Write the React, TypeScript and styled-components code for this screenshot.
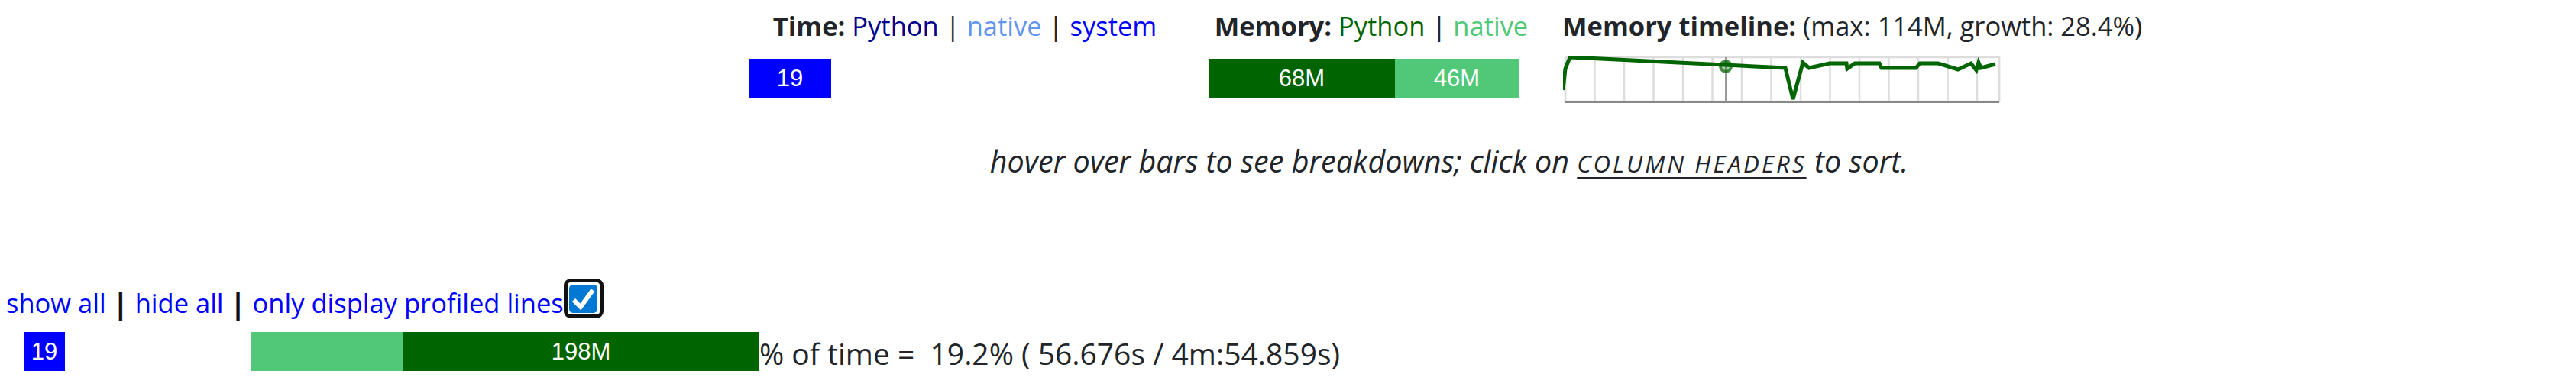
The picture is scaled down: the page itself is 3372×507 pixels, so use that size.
import React from "react";
import styled, { createGlobalStyle } from "styled-components";

const GlobalStyle = createGlobalStyle`
  body {
    margin: 8px;
    background: #ffffff;
    font-family: "Open Sans", "Noto Sans", sans-serif;
    color: #212529;
  }
`;

const Header = styled.div`
  margin-left: 962px;
  width: 1854px;
`;

const Summary = styled.div`
  display: flex;
`;

const Column = styled.div<{ $width?: number; $pad: number; $align: "center" | "left" }>`
  display: flex;
  flex-direction: column;
  width: ${(p) => (p.$width ? `${p.$width}px` : "auto")};
  flex: ${(p) => (p.$width ? "none" : "1")};
  text-align: ${(p) => p.$align};

  & > :last-child {
    margin-left: ${(p) => p.$pad}px;
  }
`;

const Title = styled.div<{ $indent?: number }>`
  font-size: 34.5px;
  line-height: 51px;
  white-space: nowrap;
  padding-left: ${(p) => p.$indent ?? 0}px;

  b {
    font-weight: 700;
  }
`;

const Pipe = styled.span`
  color: #212529;
`;

const Tint = styled.span<{ $color: string }>`
  color: ${(p) => p.$color};
`;

const Bar = styled.div`
  display: flex;
  height: 52px;
  margin-top: 18px;
`;

const Segment = styled.div<{ $color: string; $width: number }>`
  width: ${(p) => p.$width}px;
  background: ${(p) => p.$color};
  color: #ffffff;
  font-family: "Liberation Sans", Arial, sans-serif;
  font-size: 31px;
  display: flex;
  align-items: center;
  justify-content: center;
`;

const Timeline = styled.svg`
  display: block;
  margin-top: 14px;
`;

const Hint = styled.div`
  margin-top: 46px;
  text-align: center;
  font-style: italic;
  font-size: 39.5px;
  line-height: 58px;
  white-space: nowrap;
`;

const SmallCaps = styled.span`
  text-transform: uppercase;
  font-size: 0.79em;
  letter-spacing: 3px;
  text-decoration: underline;
  text-decoration-thickness: 3px;
  text-underline-offset: 6px;
`;

const Controls = styled.div`
  display: flex;
  align-items: flex-end;
  margin-top: 122px;
`;

const Link = styled.span`
  color: #0000ff;
  font-size: 34.5px;
  line-height: 51px;
  white-space: nowrap;
`;

const Sep = styled.span`
  font-size: 40px;
  font-weight: 700;
  line-height: 51px;
  color: #111111;
  margin: 0 8px;
`;

const Check = styled.span`
  box-sizing: border-box;
  width: 52px;
  height: 52px;
  border: 5px solid #111111;
  border-radius: 9px;
  padding: 2.5px;
  margin-bottom: 5px;
  background: #ffffff;
  display: flex;
`;

const CheckInner = styled.span`
  flex: 1;
  background: #0078d4;
  border-radius: 5px;
  display: flex;
`;

const FileRow = styled.div`
  display: flex;
  align-items: center;
  margin-top: 13px;
  height: 51px;
`;

const LineBox = styled.div`
  margin-left: 23px;
  width: 54px;
  height: 51px;
  background: #0000ff;
  color: #ffffff;
  font-family: "Liberation Sans", Arial, sans-serif;
  font-size: 31px;
  display: flex;
  align-items: center;
  justify-content: center;
`;

const MemBar = styled.div`
  display: flex;
  height: 51px;
  margin-left: 244px;
`;

const Stat = styled.span`
  font-size: 39px;
  line-height: 51px;
  white-space: pre;
  padding-top: 4px;
`;

const gridX = [3, 41.5, 80, 118.5, 157, 195.5, 234, 272.5, 311, 349.5, 388, 426.5, 465, 503.5, 542, 571];

const points: [number, number][] = [
  [0, 45], [3, 17], [9, 2], [291, 16], [301, 57], [314, 9], [322, 16], [349, 10], [371, 10],
  [372, 17], [382, 10], [414, 10], [417, 16], [462, 16], [467, 10], [491, 10], [517, 18],
  [534, 10], [541, 19], [544, 9], [547, 16], [566, 11],
];

const MemoryTimeline: React.FC = () => (
  <Timeline width={574} height={63} viewBox="0 0 574 63">
    <rect x={3} y={2} width={568} height={58} fill="none" stroke="#dddddd" strokeWidth={2.5} />
    {gridX.map((x) => (
      <line key={x} x1={x} y1={2} x2={x} y2={60} stroke="#dddddd" strokeWidth={2.5} />
    ))}
    <line x1={213} y1={2} x2={213} y2={60} stroke="#9a9a9a" strokeWidth={2} />
    <line x1={3} y1={60.5} x2={571} y2={60.5} stroke="#888888" strokeWidth={3} />
    <polyline
      points={points.map((p) => p.join(",")).join(" ")}
      fill="none"
      stroke="#006400"
      strokeWidth={5}
      strokeLinejoin="miter"
    />
    <circle cx={213} cy={14} r={7} fill="#006400" fillOpacity={0.3} stroke="#006400" strokeOpacity={0.7} strokeWidth={4} />
  </Timeline>
);

const App: React.FC = () => {
  return (
    <>
      <GlobalStyle />
      <Header>
        <Summary>
          <Column $width={586} $pad={10} $align="center">
            <Title>
              <b>Time:</b> <Tint $color="#00008b">Python</Tint> <Pipe>|</Pipe>{" "}
              <Tint $color="#6495ed">native</Tint> <Pipe>|</Pipe> <Tint $color="#0000ff">system</Tint>
            </Title>
            <Bar>
              <Segment $color="#0000ff" $width={108}>19</Segment>
            </Bar>
          </Column>
          <Column $width={478} $pad={26} $align="center">
            <Title>
              <b>Memory:</b> <Tint $color="#006400">Python</Tint> <Pipe>|</Pipe>{" "}
              <Tint $color="#50c878">native</Tint>
            </Title>
            <Bar>
              <Segment $color="#006400" $width={244}>68M</Segment>
              <Segment $color="#50c878" $width={162}>46M</Segment>
            </Bar>
          </Column>
          <Column $pad={12} $align="left">
            <Title $indent={11}>
              <b>Memory timeline:</b> (max: 114M, growth: 28.4%)
            </Title>
            <MemoryTimeline />
          </Column>
        </Summary>
        <Hint>
          hover over bars to see breakdowns; click on <SmallCaps>column headers</SmallCaps> to sort.
        </Hint>
      </Header>
      <Controls>
        <Link>show all</Link>
        <Sep>|</Sep>
        <Link>hide all</Link>
        <Sep>|</Sep>
        <Link>only display profiled lines</Link>
        <Check>
          <CheckInner>
            <svg width={37} height={37} viewBox="0 0 37 37">
              <polyline points="6,20 15,29 31,7" fill="none" stroke="#ffffff" strokeWidth={6} />
            </svg>
          </CheckInner>
        </Check>
      </Controls>
      <FileRow>
        <LineBox>19</LineBox>
        <MemBar>
          <Segment $color="#50c878" $width={198} />
          <Segment $color="#006400" $width={467}>198M</Segment>
        </MemBar>
        <Stat>% of time =  19.2% ( 56.676s / 4m:54.859s)</Stat>
      </FileRow>
    </>
  );
};

export default App;
